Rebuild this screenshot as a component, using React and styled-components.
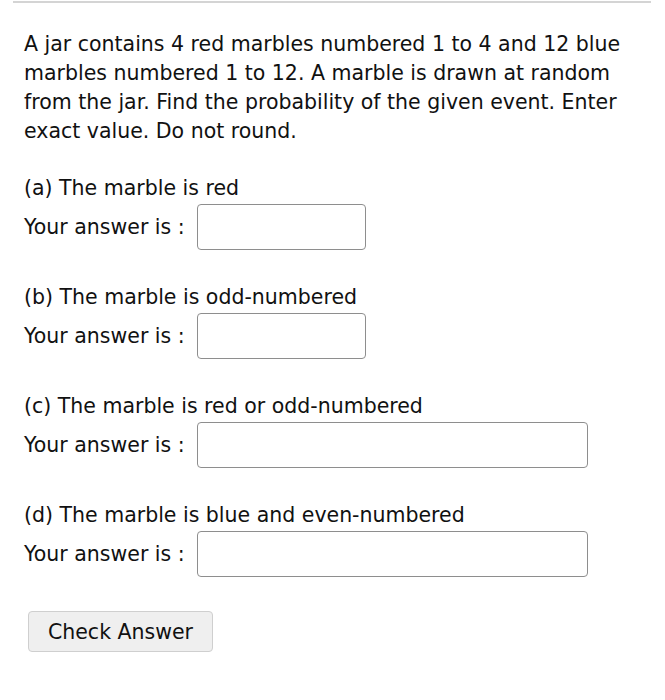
import React from 'react';
import styled, { createGlobalStyle } from 'styled-components';

const GlobalStyle = createGlobalStyle`
  html, body {
    margin: 0;
    padding: 0;
    background: #ffffff;
  }
  body {
    font-family: "DejaVu Sans", "Liberation Sans", sans-serif;
    color: #111111;
  }
`;

const Page = styled.div`
  width: 665px;
  height: 700px;
  padding-top: 1px;
  box-sizing: border-box;
`;

const TopRule = styled.div`
  height: 2px;
  margin: 0 14px 0 13px;
  background: #d4d4d4;
`;

const Content = styled.div`
  padding: 27px 18px 0 24px;
  font-size: 20.5px;
  line-height: 29px;
`;

const Intro = styled.p`
  margin: 0 0 28px;
`;

const Question = styled.div`
  margin-bottom: 33px;
`;

const Label = styled.div`
  line-height: 29px;
`;

const AnswerRow = styled.div`
  display: flex;
  align-items: center;
  gap: 12px;
  margin-top: 1px;
`;

const AnswerInput = styled.input`
  width: ${(p) => (p.wide ? '391px' : '169px')};
  height: 46px;
  box-sizing: border-box;
  border: 1px solid #8e8e8e;
  border-radius: 4px;
  background: #fff;
  font: inherit;
`;

const CheckButton = styled.button`
  margin: 1px 0 0 4px;
  width: 185px;
  height: 41px;
  background: #efefef;
  border: 1px solid #cfcfcf;
  border-radius: 4px;
  font-family: inherit;
  font-size: 20.5px;
  color: #111;
`;

const questions = [
  { label: '(a) The marble is red', wide: false },
  { label: '(b) The marble is odd-numbered', wide: false },
  { label: '(c) The marble is red or odd-numbered', wide: true },
  { label: '(d) The marble is blue and even-numbered', wide: true },
];

export default function App() {
  return (
    <Page>
      <GlobalStyle />
      <TopRule />
      <Content>
        <Intro>
          A jar contains 4 red marbles numbered 1 to 4 and 12 blue marbles numbered 1 to 12. A
          marble is drawn at random from the jar. Find the probability of the given event. Enter
          exact value. Do not round.
        </Intro>
        {questions.map((q) => (
          <Question key={q.label}>
            <Label>{q.label}</Label>
            <AnswerRow>
              <span>Your answer is :</span>
              <AnswerInput type="text" wide={q.wide ? 1 : 0} />
            </AnswerRow>
          </Question>
        ))}
        <CheckButton>Check Answer</CheckButton>
      </Content>
    </Page>
  );
}
